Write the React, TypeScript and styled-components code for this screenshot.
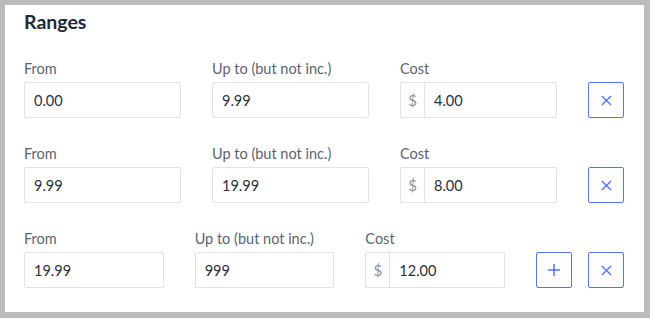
import styled, { createGlobalStyle } from "styled-components";

const GlobalStyle = createGlobalStyle`
  html, body {
    margin: 0;
    padding: 0;
    background: #bcbcbc;
  }
  body {
    padding: 5px 6px 6px 5px;
    font-family: "Lato", "Liberation Sans", sans-serif;
  }
`;

const Card = styled.div`
  background: #ffffff;
  height: 307px;
  box-sizing: border-box;
  padding: 5px 20px 0 19px;
`;

const Title = styled.h2`
  margin: 0 0 26px;
  font-size: 19.5px;
  line-height: 24px;
  font-weight: 700;
  color: #1f2937;
`;

const RowList = styled.div`
  display: flex;
  flex-direction: column;
  gap: 27px;
`;

const Row = styled.div`
  display: flex;
  align-items: flex-end;
  gap: 31px;
`;

const Field = styled.div`
  flex: 1;
  display: flex;
  flex-direction: column;
  gap: 4px;
  min-width: 0;
`;

const Label = styled.label`
  font-size: 14.5px;
  line-height: 18px;
  color: #5b6472;
`;

const InputGroup = styled.div`
  display: flex;
  height: 36px;
  box-sizing: border-box;
  border: 1px solid #e2e2e2;
  border-radius: 2px;
`;

const Prefix = styled.span`
  width: 23px;
  display: flex;
  align-items: center;
  justify-content: center;
  border-right: 1px solid #e2e2e2;
  color: #8a93a0;
  font-size: 15px;
`;

const Input = styled.input`
  flex: 1;
  min-width: 0;
  border: none;
  outline: none;
  padding: 0 9px;
  font-family: inherit;
  font-size: 14.5px;
  color: #2b2f36;
  background: transparent;
`;

const Buttons = styled.div`
  display: flex;
  gap: 16px;
`;

const IconButton = styled.button`
  width: 36px;
  height: 36px;
  box-sizing: border-box;
  border: 1px solid #5274f5;
  border-radius: 2px;
  background: #ffffff;
  display: flex;
  align-items: center;
  justify-content: center;
  padding: 0;
  cursor: pointer;
  color: #5274f5;
`;

const CloseIcon = () => (
  <svg width="11" height="11" viewBox="0 0 12 12" fill="none" stroke="currentColor" strokeWidth="1.5">
    <path d="M1 1l10 10M11 1L1 11" />
  </svg>
);

const PlusIcon = () => (
  <svg width="12" height="12" viewBox="0 0 12 12" fill="none" stroke="currentColor" strokeWidth="1.5">
    <path d="M6 0v12M0 6h12" />
  </svg>
);

interface IRange {
  from: string;
  upTo: string;
  cost: string;
}

const ranges: IRange[] = [
  { from: "0.00", upTo: "9.99", cost: "4.00" },
  { from: "9.99", upTo: "19.99", cost: "8.00" },
  { from: "19.99", upTo: "999", cost: "12.00" },
];

function App() {
  return (
    <>
      <GlobalStyle />
      <Card>
        <Title>Ranges</Title>
        <RowList>
          {ranges.map((range, i) => (
            <Row key={i}>
              <Field>
                <Label>From</Label>
                <InputGroup>
                  <Input defaultValue={range.from} />
                </InputGroup>
              </Field>
              <Field>
                <Label>Up to (but not inc.)</Label>
                <InputGroup>
                  <Input defaultValue={range.upTo} />
                </InputGroup>
              </Field>
              <Field>
                <Label>Cost</Label>
                <InputGroup>
                  <Prefix>$</Prefix>
                  <Input defaultValue={range.cost} />
                </InputGroup>
              </Field>
              <Buttons>
                {i === ranges.length - 1 && (
                  <IconButton>
                    <PlusIcon />
                  </IconButton>
                )}
                <IconButton>
                  <CloseIcon />
                </IconButton>
              </Buttons>
            </Row>
          ))}
        </RowList>
      </Card>
    </>
  );
}

export default App;
